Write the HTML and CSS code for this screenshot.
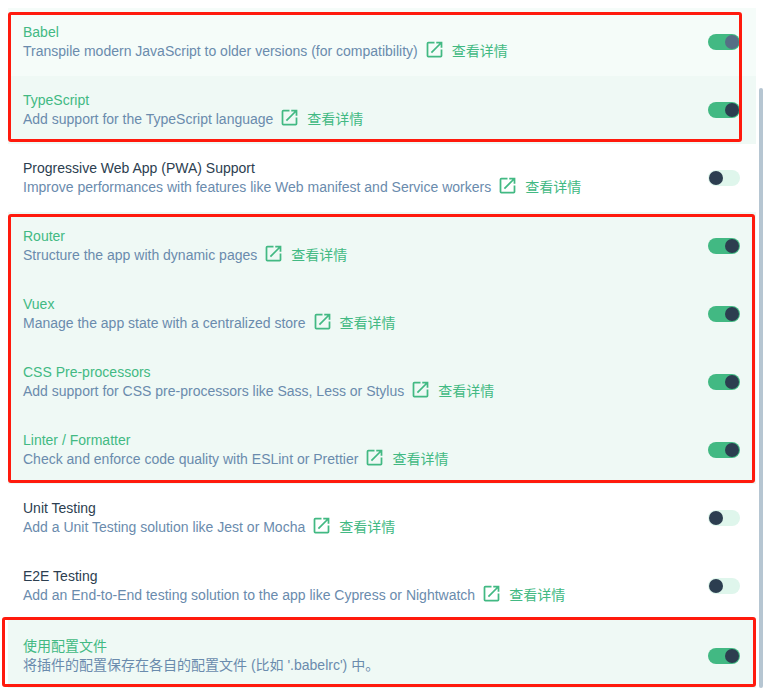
FILE: index.html
```html
<!DOCTYPE html>
<html lang="en">
<head>
    <meta charset="UTF-8">
    <title>Features</title>
    <link rel="stylesheet" href="styles.css">
</head>
<body>
<div class="page">
    <div class="list">
        <div class="row hover on">
            <div class="info">
                <div class="name">Babel</div>
                <div class="desc">Transpile modern JavaScript to older versions (for compatibility)
                    <a class="more"><svg class="icon" viewBox="0 0 24 24"><path d="M19 19H5V5h7V3H5a2 2 0 0 0-2 2v14a2 2 0 0 0 2 2h14a2 2 0 0 0 2-2v-7h-2v7zM14 3v2h3.59l-9.83 9.83 1.41 1.41L19 6.41V10h2V3h-7z"/></svg><span>查看详情</span></a>
                </div>
            </div>
            <div class="toggle"><div class="knob"></div></div>
        </div>
        <div class="row on">
            <div class="info">
                <div class="name">TypeScript</div>
                <div class="desc">Add support for the TypeScript language
                    <a class="more"><svg class="icon" viewBox="0 0 24 24"><path d="M19 19H5V5h7V3H5a2 2 0 0 0-2 2v14a2 2 0 0 0 2 2h14a2 2 0 0 0 2-2v-7h-2v7zM14 3v2h3.59l-9.83 9.83 1.41 1.41L19 6.41V10h2V3h-7z"/></svg><span>查看详情</span></a>
                </div>
            </div>
            <div class="toggle"><div class="knob"></div></div>
        </div>
        <div class="row">
            <div class="info">
                <div class="name">Progressive Web App (PWA) Support</div>
                <div class="desc">Improve performances with features like Web manifest and Service workers
                    <a class="more"><svg class="icon" viewBox="0 0 24 24"><path d="M19 19H5V5h7V3H5a2 2 0 0 0-2 2v14a2 2 0 0 0 2 2h14a2 2 0 0 0 2-2v-7h-2v7zM14 3v2h3.59l-9.83 9.83 1.41 1.41L19 6.41V10h2V3h-7z"/></svg><span>查看详情</span></a>
                </div>
            </div>
            <div class="toggle"><div class="knob"></div></div>
        </div>
        <div class="row on">
            <div class="info">
                <div class="name">Router</div>
                <div class="desc">Structure the app with dynamic pages
                    <a class="more"><svg class="icon" viewBox="0 0 24 24"><path d="M19 19H5V5h7V3H5a2 2 0 0 0-2 2v14a2 2 0 0 0 2 2h14a2 2 0 0 0 2-2v-7h-2v7zM14 3v2h3.59l-9.83 9.83 1.41 1.41L19 6.41V10h2V3h-7z"/></svg><span>查看详情</span></a>
                </div>
            </div>
            <div class="toggle"><div class="knob"></div></div>
        </div>
        <div class="row on">
            <div class="info">
                <div class="name">Vuex</div>
                <div class="desc">Manage the app state with a centralized store
                    <a class="more"><svg class="icon" viewBox="0 0 24 24"><path d="M19 19H5V5h7V3H5a2 2 0 0 0-2 2v14a2 2 0 0 0 2 2h14a2 2 0 0 0 2-2v-7h-2v7zM14 3v2h3.59l-9.83 9.83 1.41 1.41L19 6.41V10h2V3h-7z"/></svg><span>查看详情</span></a>
                </div>
            </div>
            <div class="toggle"><div class="knob"></div></div>
        </div>
        <div class="row on">
            <div class="info">
                <div class="name">CSS Pre-processors</div>
                <div class="desc">Add support for CSS pre-processors like Sass, Less or Stylus
                    <a class="more"><svg class="icon" viewBox="0 0 24 24"><path d="M19 19H5V5h7V3H5a2 2 0 0 0-2 2v14a2 2 0 0 0 2 2h14a2 2 0 0 0 2-2v-7h-2v7zM14 3v2h3.59l-9.83 9.83 1.41 1.41L19 6.41V10h2V3h-7z"/></svg><span>查看详情</span></a>
                </div>
            </div>
            <div class="toggle"><div class="knob"></div></div>
        </div>
        <div class="row on">
            <div class="info">
                <div class="name">Linter / Formatter</div>
                <div class="desc">Check and enforce code quality with ESLint or Prettier
                    <a class="more"><svg class="icon" viewBox="0 0 24 24"><path d="M19 19H5V5h7V3H5a2 2 0 0 0-2 2v14a2 2 0 0 0 2 2h14a2 2 0 0 0 2-2v-7h-2v7zM14 3v2h3.59l-9.83 9.83 1.41 1.41L19 6.41V10h2V3h-7z"/></svg><span>查看详情</span></a>
                </div>
            </div>
            <div class="toggle"><div class="knob"></div></div>
        </div>
        <div class="row">
            <div class="info">
                <div class="name">Unit Testing</div>
                <div class="desc">Add a Unit Testing solution like Jest or Mocha
                    <a class="more"><svg class="icon" viewBox="0 0 24 24"><path d="M19 19H5V5h7V3H5a2 2 0 0 0-2 2v14a2 2 0 0 0 2 2h14a2 2 0 0 0 2-2v-7h-2v7zM14 3v2h3.59l-9.83 9.83 1.41 1.41L19 6.41V10h2V3h-7z"/></svg><span>查看详情</span></a>
                </div>
            </div>
            <div class="toggle"><div class="knob"></div></div>
        </div>
        <div class="row">
            <div class="info">
                <div class="name">E2E Testing</div>
                <div class="desc">Add an End-to-End testing solution to the app like Cypress or Nightwatch
                    <a class="more"><svg class="icon" viewBox="0 0 24 24"><path d="M19 19H5V5h7V3H5a2 2 0 0 0-2 2v14a2 2 0 0 0 2 2h14a2 2 0 0 0 2-2v-7h-2v7zM14 3v2h3.59l-9.83 9.83 1.41 1.41L19 6.41V10h2V3h-7z"/></svg><span>查看详情</span></a>
                </div>
            </div>
            <div class="toggle"><div class="knob"></div></div>
        </div>
        <div class="row on last">
            <div class="info">
                <div class="name">使用配置文件</div>
                <div class="desc">将插件的配置保存在各自的配置文件 (比如 '.babelrc') 中。</div>
            </div>
            <div class="toggle"><div class="knob"></div></div>
        </div>
    </div>
    <div class="scrollbar"></div>
</div>
<!-- red boxes drawn over the list -->
<div class="mark mark-a"></div>
<div class="mark mark-b"></div>
<div class="mark mark-c"></div>
</body>
</html>
```

FILE: styles.css
```css
body {
    margin: 8px 0 0 8px;
    background-color: white;
    font-family: "Liberation Sans", "Noto Sans CJK SC", sans-serif;
    font-size: 14px;
    color: #2c3e50;
}

.page {
    display: flex;
    align-items: flex-start;
}

.list {
    width: 748px;
}

.row {
    display: flex;
    align-items: center;
    justify-content: space-between;
    box-sizing: border-box;
    height: 68px;
    padding: 0 16px 0 15px;
}

.row.on {
    background-color: #eff9f5;
}

.row.hover {
    background-color: #f5fcf9;
}

.row.last {
    padding-top: 3px;
}

.name {
    line-height: 19px;
}

.row.on .name {
    color: #42b983;
}

.desc {
    display: flex;
    align-items: center;
    gap: 6px;
    line-height: 19px;
    color: #6a8bad;
}

.more {
    display: flex;
    align-items: center;
    gap: 7px;
    color: #42b983;
}

.icon {
    width: 21px;
    height: 21px;
    margin-top: -5px;
    fill: #42b983;
}

.toggle {
    display: flex;
    align-items: center;
    width: 32px;
    height: 16px;
    border-radius: 8px;
    background-color: #dff6ec;
}

.row.on .toggle {
    justify-content: flex-end;
    background-color: #42b983;
}

.knob {
    width: 14px;
    height: 14px;
    margin: 0 1px;
    border-radius: 50%;
    background-color: #2c3e50;
}

.row.hover .knob {
    background-color: #566f85;
}

.scrollbar {
    width: 4px;
    height: 600px;
    margin: 80px 0 0 3px;
    border-radius: 2px;
    background-color: #b6c6d2;
}

.mark {
    position: absolute;
    box-sizing: border-box;
    border: 3px solid #ff1a0d;
    border-radius: 3px;
}

.mark-a {
    left: 8px;
    top: 12px;
    width: 734px;
    height: 130px;
}

.mark-b {
    left: 8px;
    top: 214px;
    width: 747px;
    height: 269px;
}

.mark-c {
    left: 2px;
    top: 617px;
    width: 754px;
    height: 70px;
}
```
